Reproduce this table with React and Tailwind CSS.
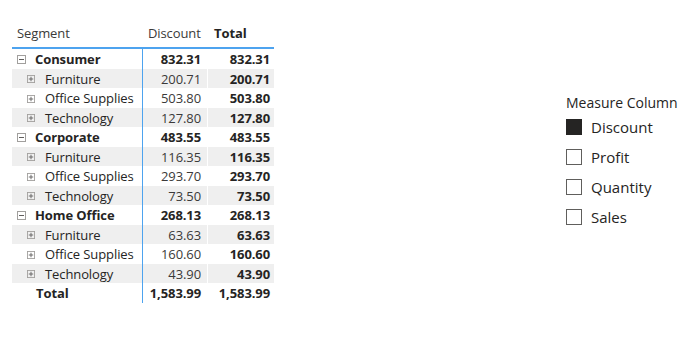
import React from "react";

const groups = [
  { name: "Consumer", total: "832.31", items: [["Furniture", "200.71"], ["Office Supplies", "503.80"], ["Technology", "127.80"]] },
  { name: "Corporate", total: "483.55", items: [["Furniture", "116.35"], ["Office Supplies", "293.70"], ["Technology", "73.50"]] },
  { name: "Home Office", total: "268.13", items: [["Furniture", "63.63"], ["Office Supplies", "160.60"], ["Technology", "43.90"]] },
];

function Box({ minus, size }) {
  return (
    <svg width={size} height={size} viewBox="0 0 9 9" className="shrink-0">
      <rect x="0.5" y="0.5" width="8" height="8" fill="none" stroke="#a19f9d" />
      <line x1="2" y1="4.5" x2="7" y2="4.5" stroke="#605e5c" />
      {!minus && <line x1="4.5" y1="2" x2="4.5" y2="7" stroke="#605e5c" />}
    </svg>
  );
}

function Row({ label, disc, total, level, gray, bold }) {
  return (
    <div className={`flex h-[19.5px] items-center ${gray ? "bg-[#efefef]" : ""}`}>
      <div className="w-[131px] h-full flex items-center pt-[2px] border-r border-[#4da3ef]">
        {level === 0 && (
          <div className="flex items-center pl-[5px] gap-[9px]">
            <Box minus size={9} />
            <span className="font-bold">{label}</span>
          </div>
        )}
        {level === 1 && (
          <div className="flex items-center pl-[15px] gap-[10px]">
            <Box size={8} />
            <span>{label}</span>
          </div>
        )}
        {level === 2 && <span className="pl-[24px] font-bold">{label}</span>}
      </div>
      <div className={`w-[65px] h-full flex items-center justify-end pt-[2px] pr-[6px] border-r border-white ${bold ? "font-bold" : "text-[#3b3a39]"}`}>{disc}</div>
      <div className="w-[66px] h-full flex items-center justify-end pt-[2px] pr-[4px] font-bold">{total}</div>
    </div>
  );
}

export default function App() {
  return (
    <div className="w-[694px] h-[344px] bg-white flex text-[#252423]" style={{ fontFamily: '"Open Sans", sans-serif' }}>
      <div className="pl-[12px] pt-[20px] text-[13px] tracking-[-0.1px]">
        <div className="w-[262px]">
          <div className="flex h-[29px] items-center border-b-2 border-[#4da3ef] text-[#3b3a39]">
            <div className="w-[131px] pl-[5px]">Segment</div>
            <div className="w-[65px] pl-[5px]">Discount</div>
            <div className="w-[66px] pl-[6px] font-bold text-[#252423]">Total</div>
          </div>
          {groups.map((g) => (
            <React.Fragment key={g.name}>
              <Row label={g.name} disc={g.total} total={g.total} level={0} bold />
              {g.items.map(([n, v], i) => (
                <Row key={n} label={n} disc={v} total={v} level={1} gray={i !== 1} />
              ))}
            </React.Fragment>
          ))}
          <Row label="Total" disc="1,583.99" total="1,583.99" level={2} bold />
        </div>
      </div>
      <div className="ml-[292px] pt-[92px]">
        <div className="text-[14px] text-[#252423] mb-[6px]">Measure Column</div>
        <div className="flex flex-col gap-[14px] text-[15px]">
          {["Discount", "Profit", "Quantity", "Sales"].map((s, i) => (
            <div key={s} className="flex items-center gap-[9px] h-[16px]">
              <div className={`w-[16px] h-[16px] border border-[#605e5c] ${i === 0 ? "bg-[#252423] border-[#252423]" : "bg-white"}`} />
              <span>{s}</span>
            </div>
          ))}
        </div>
      </div>
    </div>
  );
}
